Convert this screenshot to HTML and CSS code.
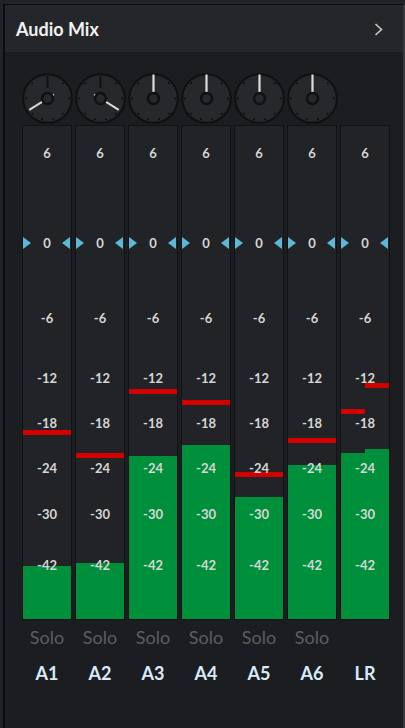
FILE: index.html
```html
<!DOCTYPE html>
<html lang="en">
<head>
    <meta charset="utf-8">
    <title>Audio Mix</title>
    <link rel="stylesheet" href="styles.css">
</head>
<body>
<svg class="defs" width="0" height="0">
    <defs>
        <g id="face">
            <circle cx="25.5" cy="25.5" r="24.3" fill="#27282c" stroke="#0f1012" stroke-width="2"/>
            <g fill="#0c0d0f">
                <circle cx="25.5" cy="4" r="1"/>
                <circle cx="10.3" cy="10.3" r="1"/>
                <circle cx="40.7" cy="10.3" r="1"/>
                <circle cx="4" cy="25.5" r="1"/>
                <circle cx="47" cy="25.5" r="1"/>
                <circle cx="10.3" cy="40.7" r="1"/>
                <circle cx="40.7" cy="40.7" r="1"/>
                <circle cx="19.9" cy="46.3" r="1"/>
                <circle cx="31.1" cy="46.3" r="1"/>
            </g>
        </g>
    </defs>
</svg>
<div class="panel">
    <div class="head">
        <span class="title">Audio Mix</span>
        <svg class="chev" width="10" height="13" viewBox="0 0 10 13"><path d="M1.5 1 L7.5 6.5 L1.5 12" fill="none" stroke="#c9c9c9" stroke-width="1.6"/></svg>
    </div>
    <div class="mixer">
        <!-- A1 -->
        <div class="strip">
            <svg class="knob" viewBox="0 0 51 51">
                <use href="#face"/>
                <line x1="25.5" y1="5" x2="25.5" y2="15" stroke="#0f1012" stroke-width="2"/>
                <line x1="25.5" y1="18" x2="25.5" y2="47" stroke="#dcdcdc" stroke-width="2" transform="rotate(58 25.5 25.5)"/>
                <circle cx="25.5" cy="25.5" r="5.5" fill="#27282c" stroke="#0f1012" stroke-width="2.4"/>
            </svg>
            <div class="meter">
                <div class="level" style="height:53px"></div>
                <div class="peak" style="top:304px"></div>
                <i class="tri-r"></i><i class="tri-l"></i>
                <div class="scale">
                    <span class="s6">6</span><span class="s0">0</span><span class="s-6">-6</span><span class="s-12">-12</span>
                    <span class="s-18">-18</span><span class="s-24">-24</span><span class="s-30">-30</span><span class="s-42">-42</span>
                </div>
            </div>
            <div class="solo">Solo</div>
            <div class="name">A1</div>
        </div>
        <!-- A2 -->
        <div class="strip">
            <svg class="knob" viewBox="0 0 51 51">
                <use href="#face"/>
                <line x1="25.5" y1="5" x2="25.5" y2="15" stroke="#0f1012" stroke-width="2"/>
                <line x1="25.5" y1="18" x2="25.5" y2="47" stroke="#dcdcdc" stroke-width="2" transform="rotate(-58 25.5 25.5)"/>
                <circle cx="25.5" cy="25.5" r="5.5" fill="#27282c" stroke="#0f1012" stroke-width="2.4"/>
            </svg>
            <div class="meter">
                <div class="level" style="height:56px"></div>
                <div class="peak" style="top:327px"></div>
                <i class="tri-r"></i><i class="tri-l"></i>
                <div class="scale">
                    <span class="s6">6</span><span class="s0">0</span><span class="s-6">-6</span><span class="s-12">-12</span>
                    <span class="s-18">-18</span><span class="s-24">-24</span><span class="s-30">-30</span><span class="s-42">-42</span>
                </div>
            </div>
            <div class="solo">Solo</div>
            <div class="name">A2</div>
        </div>
        <!-- A3 -->
        <div class="strip">
            <svg class="knob" viewBox="0 0 51 51">
                <use href="#face"/>
                <line x1="25.5" y1="1.5" x2="25.5" y2="19" stroke="#dcdcdc" stroke-width="2.2"/>
                <circle cx="25.5" cy="25.5" r="5.5" fill="#27282c" stroke="#0f1012" stroke-width="2.4"/>
            </svg>
            <div class="meter">
                <div class="level" style="height:163px"></div>
                <div class="peak" style="top:263px"></div>
                <i class="tri-r"></i><i class="tri-l"></i>
                <div class="scale">
                    <span class="s6">6</span><span class="s0">0</span><span class="s-6">-6</span><span class="s-12">-12</span>
                    <span class="s-18">-18</span><span class="s-24">-24</span><span class="s-30">-30</span><span class="s-42">-42</span>
                </div>
            </div>
            <div class="solo">Solo</div>
            <div class="name">A3</div>
        </div>
        <!-- A4 -->
        <div class="strip">
            <svg class="knob" viewBox="0 0 51 51">
                <use href="#face"/>
                <line x1="25.5" y1="1.5" x2="25.5" y2="19" stroke="#dcdcdc" stroke-width="2.2"/>
                <circle cx="25.5" cy="25.5" r="5.5" fill="#27282c" stroke="#0f1012" stroke-width="2.4"/>
            </svg>
            <div class="meter">
                <div class="level" style="height:174px"></div>
                <div class="peak" style="top:274px"></div>
                <i class="tri-r"></i><i class="tri-l"></i>
                <div class="scale">
                    <span class="s6">6</span><span class="s0">0</span><span class="s-6">-6</span><span class="s-12">-12</span>
                    <span class="s-18">-18</span><span class="s-24">-24</span><span class="s-30">-30</span><span class="s-42">-42</span>
                </div>
            </div>
            <div class="solo">Solo</div>
            <div class="name">A4</div>
        </div>
        <!-- A5 -->
        <div class="strip">
            <svg class="knob" viewBox="0 0 51 51">
                <use href="#face"/>
                <line x1="25.5" y1="1.5" x2="25.5" y2="19" stroke="#dcdcdc" stroke-width="2.2"/>
                <circle cx="25.5" cy="25.5" r="5.5" fill="#27282c" stroke="#0f1012" stroke-width="2.4"/>
            </svg>
            <div class="meter">
                <div class="level" style="height:122px"></div>
                <div class="peak" style="top:346px"></div>
                <i class="tri-r"></i><i class="tri-l"></i>
                <div class="scale">
                    <span class="s6">6</span><span class="s0">0</span><span class="s-6">-6</span><span class="s-12">-12</span>
                    <span class="s-18">-18</span><span class="s-24">-24</span><span class="s-30">-30</span><span class="s-42">-42</span>
                </div>
            </div>
            <div class="solo">Solo</div>
            <div class="name">A5</div>
        </div>
        <!-- A6 -->
        <div class="strip">
            <svg class="knob" viewBox="0 0 51 51">
                <use href="#face"/>
                <line x1="25.5" y1="1.5" x2="25.5" y2="19" stroke="#dcdcdc" stroke-width="2.2"/>
                <circle cx="25.5" cy="25.5" r="5.5" fill="#27282c" stroke="#0f1012" stroke-width="2.4"/>
            </svg>
            <div class="meter">
                <div class="level" style="height:154px"></div>
                <div class="peak" style="top:312px"></div>
                <i class="tri-r"></i><i class="tri-l"></i>
                <div class="scale">
                    <span class="s6">6</span><span class="s0">0</span><span class="s-6">-6</span><span class="s-12">-12</span>
                    <span class="s-18">-18</span><span class="s-24">-24</span><span class="s-30">-30</span><span class="s-42">-42</span>
                </div>
            </div>
            <div class="solo">Solo</div>
            <div class="name">A6</div>
        </div>
        <!-- LR: two halves -->
        <div class="strip">
            <div class="knob"></div>
            <div class="meter">
                <div class="level half-l" style="height:166px"></div>
                <div class="level half-r" style="height:170px"></div>
                <div class="peak half-l" style="top:283px"></div>
                <div class="peak half-r" style="top:257px"></div>
                <i class="tri-r"></i><i class="tri-l"></i>
                <div class="scale">
                    <span class="s6">6</span><span class="s0">0</span><span class="s-6">-6</span><span class="s-12">-12</span>
                    <span class="s-18">-18</span><span class="s-24">-24</span><span class="s-30">-30</span><span class="s-42">-42</span>
                </div>
            </div>
            <div class="solo off">Solo</div>
            <div class="name">LR</div>
        </div>
    </div>
</div>
</body>
</html>
```

FILE: styles.css
```css
html, body {
    margin: 0;
    height: 100%;
}

body {
    background-color: #222326;
    font-family: Lato, "Open Sans", sans-serif;
}

.defs {
    position: absolute;
}

.panel {
    box-sizing: border-box;
    height: calc(100% - 4px);
    margin: 4px 0 0 3px;
    border-top: 1px solid #0c0c0e;
    border-left: 2px solid #0c0c0e;
    border-right: 2px solid #38393d;
    background-color: #1c1d20;
}

/* header */
.head {
    display: flex;
    align-items: center;
    justify-content: space-between;
    height: 47px;
    padding: 0 19px 0 11px;
    background-color: #252629;
}

.title {
    font-size: 18px;
    font-weight: bold;
    color: #f2f2f2;
}

.chev {
    display: block;
    margin-top: 1px;
}

/* channel strips */
.mixer {
    display: flex;
    gap: 3px;
    padding: 21px 0 0 17px;
}

.strip {
    display: flex;
    flex-direction: column;
    align-items: center;
    width: 50px;
}

.knob {
    display: block;
    width: 51px;
    height: 51px;
    flex: none;
}

.meter {
    position: relative;
    box-sizing: border-box;
    width: 50px;
    height: 495px;
    margin-top: 1px;
    border: 1px solid #121316;
    background-color: #222327;
    overflow: hidden;
}

.level {
    position: absolute;
    left: 0;
    right: 0;
    bottom: 0;
    background-color: #00903b;
}

.peak {
    position: absolute;
    left: 0;
    right: 0;
    height: 5px;
    background-color: #d30000;
}

.half-l {
    right: 50%;
}

.half-r {
    left: 50%;
}

.level.half-l {
    right: calc(50% - 1px);
}

/* unity markers */
.tri-r, .tri-l {
    position: absolute;
    top: 111px;
    width: 0;
    height: 0;
    border-top: 6px solid transparent;
    border-bottom: 6px solid transparent;
}

.tri-r {
    left: 0;
    border-left: 8px solid #5bb8d7;
}

.tri-l {
    right: 1px;
    border-right: 8px solid #5bb8d7;
}

/* dB scale */
.scale span {
    position: absolute;
    left: 0;
    right: 0;
    height: 14px;
    line-height: 14px;
    text-align: center;
    font-size: 13px;
    font-weight: bold;
    color: #d6d6d6;
}

.s6 { top: 20px; }
.s0 { top: 110px; }
.s-6 { top: 185px; }
.s-12 { top: 245px; }
.s-18 { top: 290px; }
.s-24 { top: 335px; }
.s-30 { top: 381px; }
.s-42 { top: 432px; }

.solo {
    margin-top: 6px;
    line-height: 22px;
    font-size: 18px;
    color: #5a5e64;
}

.solo.off {
    visibility: hidden;
}

.name {
    margin-top: 14px;
    line-height: 22px;
    font-size: 18px;
    font-weight: bold;
    color: #d8eafa;
}
```
